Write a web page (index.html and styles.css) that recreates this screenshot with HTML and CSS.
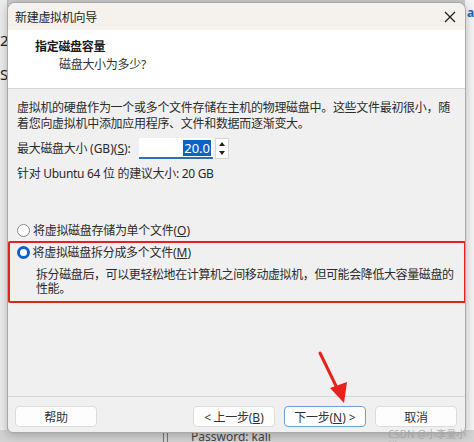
FILE: index.html
```html
<!DOCTYPE html>
<html lang="zh-CN">
<head>
    <meta charset="utf-8">
    <title>新建虚拟机向导</title>
    <link rel="stylesheet" href="styles.css">
</head>
<body>
    <!-- bits of the desktop behind the dialog -->
    <div class="desk-left">
        <span class="desk-char desk-char-1">2</span>
        <span class="desk-char desk-char-2">S</span>
    </div>
    <div class="desk-right"><span>a</span></div>
    <div class="desk-bottom">
        <span class="desk-rule"></span>
        <span class="desk-text">Password: kali</span>
    </div>

    <div class="window">
        <div class="titlebar">
            <span class="title">新建虚拟机向导</span>
            <button class="close" title="关闭">
                <svg width="12" height="12" viewBox="0 0 12 12"><path d="M1 1 L11 11 M11 1 L1 11" stroke="#222" stroke-width="1.3" fill="none"/></svg>
            </button>
        </div>

        <div class="header">
            <h1>指定磁盘容量</h1>
            <p>磁盘大小为多少?</p>
        </div>

        <div class="content">
            <p class="intro">虚拟机的硬盘作为一个或多个文件存储在主机的物理磁盘中。这些文件最初很小，随着您向虚拟机中添加应用程序、文件和数据而逐渐变大。</p>

            <div class="size-row">
                <label>最大磁盘大小 <span class="key">(GB)(<u>S</u>):</span></label>
                <div class="spin-field">
                    <div class="spin-input"><span class="selected">20.0</span></div>
                    <div class="spin-buttons">
                        <span class="spin-up"></span>
                        <span class="spin-down"></span>
                    </div>
                </div>
            </div>

            <p class="hint">针对 Ubuntu 64 位 的建议大小: 20 GB</p>

            <label class="radio"><span class="dot"></span>将虚拟磁盘存储为单个文件<span class="key">(<u>O</u>)</span></label>

            <div class="marked">
                <label class="radio"><span class="dot checked"></span>将虚拟磁盘拆分成多个文件<span class="key">(<u>M</u>)</span></label>
                <p class="radio-note">拆分磁盘后，可以更轻松地在计算机之间移动虚拟机，但可能会降低大容量磁盘的性能。</p>
            </div>
        </div>

        <div class="footer">
            <button class="btn">帮助</button>
            <span class="spacer"></span>
            <button class="btn">&lt; 上一步<span class="key">(<u>B</u>)</span></button>
            <button class="btn btn-default">下一步<span class="key">(<u>N</u>) &gt;</span></button>
            <button class="btn">取消</button>
        </div>
    </div>

    <svg class="arrow" width="474" height="442" viewBox="0 0 474 442">
        <path d="M320 353 L338 390" stroke="#e8211c" stroke-width="3" stroke-linecap="round"/>
        <path d="M344 403 L330 388 L347 382 Z" fill="#e8211c"/>
    </svg>

    <span class="watermark">CSDN @小李爱小猫</span>
</body>
</html>
```

FILE: styles.css
```css
* { box-sizing: border-box; margin: 0; }

:root {
    --text: #2b2b2b;
    --accent: #0a64c4;
}

body {
    position: relative;
    width: 474px;
    height: 442px;
    overflow: hidden;
    background: #cbcbcb;
    padding: 2px 0 0 7px;
    font-family: "Noto Sans", "Noto Sans CJK SC", sans-serif;
    font-size: 12px;
    letter-spacing: -0.3px;
    text-autospace: no-autospace;
    color: var(--text);
}

button {
    font: inherit;
    letter-spacing: inherit;
    color: inherit;
}

/* mnemonic keys like (S), kept in the latin face */
.key {
    font-family: "Noto Sans", sans-serif;
    letter-spacing: 0;
}

/* desktop behind the dialog */
.desk-left {
    position: absolute;
    left: 0;
    top: 0;
    width: 8px;
    height: 434px;
    background: #ececec;
    border-right: 1px solid #bdbdbd;
}

.desk-char {
    position: absolute;
    left: 0;
    font-size: 15px;
    color: #222;
}

.desk-char-1 { top: 30px; }
.desk-char-2 { top: 64px; }

.desk-right {
    position: absolute;
    right: 0;
    top: 0;
    width: 9px;
    height: 434px;
    background: #f4f4f4;
}

.desk-right span {
    position: absolute;
    left: 2px;
    top: 4px;
    font-size: 12px;
    font-weight: bold;
    color: #2a63b8;
}

.desk-bottom {
    position: absolute;
    left: 0;
    bottom: 0;
    width: 100%;
    height: 12px;
    background: #d2d2d2;
}

.desk-rule {
    position: absolute;
    left: 163px;
    top: 0;
    width: 5px;
    height: 12px;
    border-left: 1px solid #777;
    border-right: 1px solid #777;
}

.desk-text {
    position: absolute;
    left: 191px;
    top: 1px;
    font-size: 12px;
    line-height: 11px;
    letter-spacing: 0;
    color: #444;
}

/* dialog */
.window {
    position: relative;
    width: 459px;
    height: 431px;
    display: flex;
    flex-direction: column;
    background: #f0f0f0;
    border: 1px solid #a9a9a9;
    border-radius: 8px 8px 6px 6px;
    box-shadow: 0 2px 10px rgba(0, 0, 0, .25);
    overflow: hidden;
}

.titlebar {
    height: 27px;
    display: flex;
    align-items: center;
    justify-content: space-between;
    padding: 0 9px 0 7px;
    background: #f5f1ec;
}

.title {
    color: #1f1f1f;
}

.close {
    border: none;
    background: none;
    padding: 0;
    display: flex;
}

.header {
    height: 59px;
    padding: 8px 0 0 27px;
    background: #fff;
    border-bottom: 1px solid #d5d5d5;
}

.header h1 {
    font-size: 12px;
    font-weight: bold;
    line-height: 18px;
    color: #1a1a1a;
}

.header p {
    margin-top: 0;
    padding-left: 24px;
    line-height: 17px;
    color: #333;
}

.content {
    flex: 1;
    padding: 11px 9px 0 9px;
    line-height: 15.5px;
}

.size-row {
    display: flex;
    align-items: center;
    margin-top: 7px;
}

.size-row label {
    width: 122px;
}

.spin-field {
    display: flex;
    gap: 2px;
}

.spin-input {
    width: 74px;
    height: 21px;
    display: flex;
    align-items: center;
    justify-content: flex-end;
    padding-right: 2px;
    background: #fff;
    border-bottom: 2px solid #2f6db5;
    font-size: 13px;
    letter-spacing: 0;
}

.selected {
    background: var(--accent);
    color: #fff;
    line-height: 16px;
    padding: 0 1px;
}

.spin-buttons {
    width: 14px;
    height: 21px;
    display: flex;
    flex-direction: column;
    background: #fff;
    border: 1px solid #d6d6d6;
}

.spin-up,
.spin-down {
    flex: 1;
    display: flex;
    align-items: center;
    justify-content: center;
}

.spin-up::after {
    content: "";
    border: 3.5px solid transparent;
    border-bottom: 4px solid #222;
    border-top-width: 0;
}

.spin-down::after {
    content: "";
    border: 3.5px solid transparent;
    border-top: 4px solid #222;
    border-bottom-width: 0;
}

.hint {
    margin-top: 7px;
}

.radio {
    display: flex;
    align-items: center;
    gap: 3px;
    line-height: 16px;
}

.radio .key {
    margin-left: -3px;
}

.content > .radio {
    margin-top: 41px;
}

.dot {
    width: 13px;
    height: 13px;
    border-radius: 50%;
    border: 1px solid #8a8a8a;
    background: #fff;
    flex: none;
}

.dot.checked {
    border: 3.5px solid var(--accent);
}

.marked {
    margin: 2px -10px 0 -9px;
    padding: 2px 2px 5px 9px;
    border: 2.5px solid #e3221d;
    border-radius: 2px;
}

.marked .radio {
    margin-left: -2.5px;
}

.radio-note {
    margin-top: 7px;
    padding-left: 17px;
    line-height: 14px;
    letter-spacing: -0.4px;
}

.footer {
    height: 36px;
    display: flex;
    align-items: flex-start;
    gap: 9px;
    padding: 9px 8px 0 7px;
    border-top: 1px solid #d6d6d6;
}

.spacer {
    flex: 1;
}

.btn {
    width: 82px;
    height: 21px;
    padding: 0;
    background: #fdfdfd;
    border: 1px solid #dcdcdc;
    border-radius: 4px;
    color: #333;
}

.btn-default {
    border-color: #6ea0d6;
}

/* annotation overlay */
.arrow {
    position: absolute;
    left: 0;
    top: 0;
    pointer-events: none;
}

.watermark {
    position: absolute;
    left: 388px;
    top: 428px;
    font-size: 10px;
    line-height: 12px;
    letter-spacing: 0;
    color: rgba(160, 160, 160, .8);
}
```
